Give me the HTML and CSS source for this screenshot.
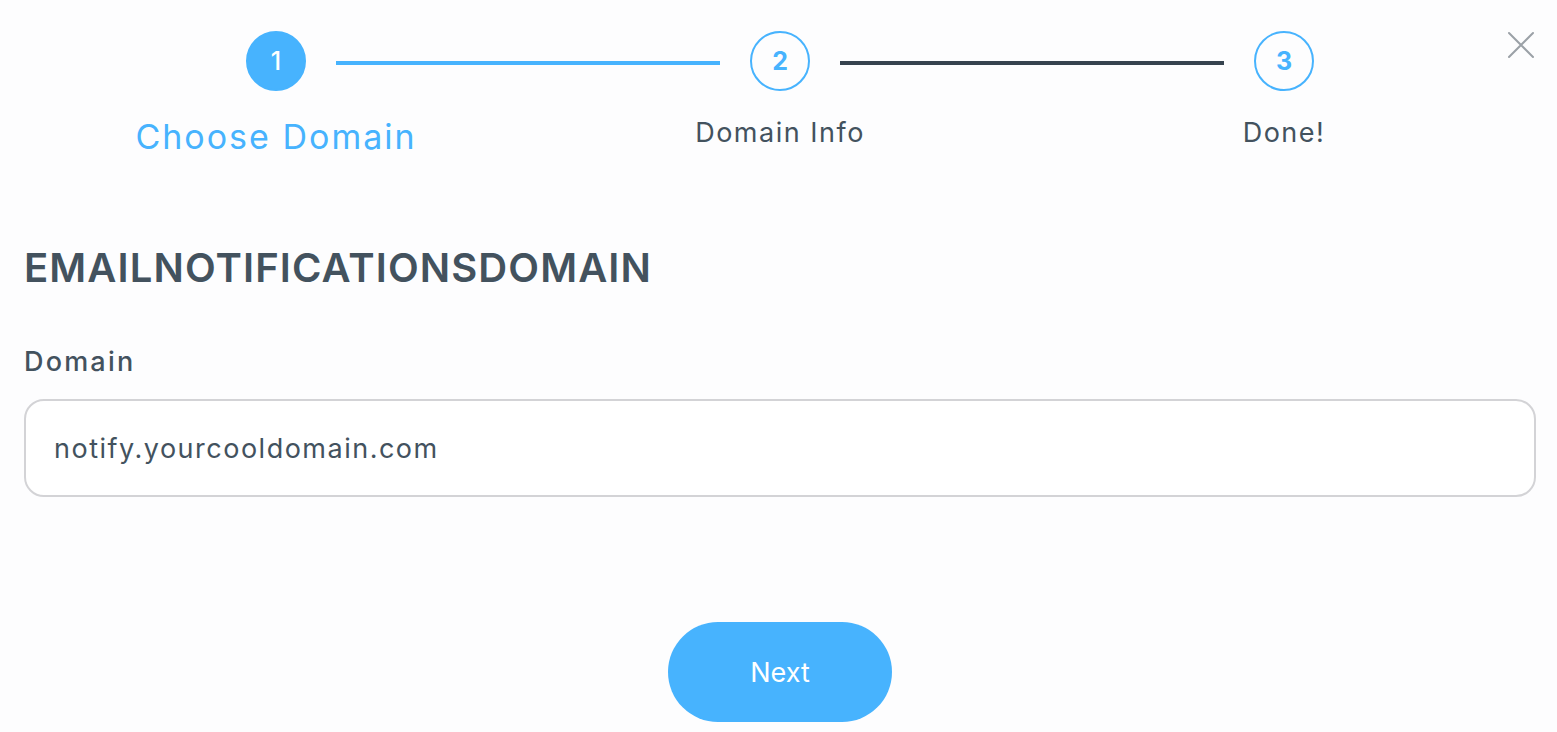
FILE: index.html
```html
<!DOCTYPE html>
<html lang="en">
<head>
    <meta charset="UTF-8">
    <meta name="viewport" content="width=device-width, initial-scale=1.0">
    <title>Email Notifications Domain</title>
    <link rel="stylesheet" href="styles.css">
</head>
<body>
    <div class="wizard">
        <button class="close-btn" type="button" aria-label="Close">
            <svg width="28" height="28" viewBox="0 0 28 28">
                <path d="M2 2 L26 26 M26 2 L2 26" stroke="#9ba1a7" stroke-width="2" stroke-linecap="round"/>
            </svg>
        </button>

        <div class="steps">
            <div class="step-track">
                <span class="step-dot active">1</span>
                <span class="step-line done"></span>
                <span class="step-dot">2</span>
                <span class="step-line"></span>
                <span class="step-dot">3</span>
            </div>
            <div class="step-labels">
                <div class="step-label active">Choose Domain</div>
                <div class="step-label">Domain Info</div>
                <div class="step-label">Done!</div>
            </div>
        </div>

        <h2 class="title">EMAILNOTIFICATIONSDOMAIN</h2>

        <form class="domain-form" onsubmit="return false">
            <label for="domain">Domain</label>
            <input type="text" id="domain" name="domain" value="notify.yourcooldomain.com">

            <div class="actions">
                <button type="submit" class="next-btn">Next</button>
            </div>
        </form>
    </div>
</body>
</html>
```

FILE: styles.css
```css
* {
    margin: 0;
    padding: 0;
    box-sizing: border-box;
}

body {
    font-family: Inter, 'Noto Sans', sans-serif;
    background: #fdfdfe;
    color: #43525e;
    overflow: hidden;
}

.wizard {
    position: relative;
    padding: 31px 21px 0 24px;
}

.close-btn {
    position: absolute;
    top: 31px;
    right: 22px;
    background: none;
    border: none;
    cursor: pointer;
    line-height: 0;
}

.step-track {
    display: grid;
    grid-template-columns: 60px 1fr 60px 1fr 60px;
    align-items: center;
    column-gap: 30px;
    padding: 0 222px;
}

.step-dot {
    width: 60px;
    height: 60px;
    border-radius: 50%;
    border: 2px solid #47b3fe;
    color: #47b3fe;
    display: flex;
    align-items: center;
    justify-content: center;
    font-size: 25px;
    font-weight: 700;
}

.step-dot.active {
    background: #47b3fe;
    color: #fff;
    font-weight: 500;
}

.step-line {
    height: 4px;
    margin-top: 4px;
    background: #36434f;
}

.step-line.done {
    background: #47b3fe;
}

.step-labels {
    display: grid;
    grid-template-columns: repeat(3, 1fr);
    text-align: center;
    margin-top: 24px;
}

.step-label {
    font-size: 27px;
    letter-spacing: 1.5px;
    line-height: 36px;
}

.step-label.active {
    color: #47b3fe;
    font-size: 34px;
    letter-spacing: 2px;
    line-height: 44px;
}

.title {
    margin-top: 84px;
    font-size: 40px;
    font-weight: 600;
    letter-spacing: 1.1px;
    line-height: 50px;
}

.domain-form label {
    display: block;
    margin-top: 52px;
    font-size: 27px;
    font-weight: 500;
    letter-spacing: 2.2px;
}

.domain-form input {
    display: block;
    width: 100%;
    height: 98px;
    margin-top: 21px;
    padding: 0 28px;
    border: 2px solid #d3d3d6;
    border-radius: 20px;
    background: #fff;
    font-family: inherit;
    font-size: 27px;
    letter-spacing: 1.5px;
    color: #43525e;
}

.domain-form input:focus {
    outline: none;
    border-color: #47b3fe;
}

.actions {
    display: flex;
    justify-content: center;
    margin-top: 125px;
}

.next-btn {
    width: 224px;
    height: 100px;
    border: none;
    border-radius: 50px;
    background: #47b3fe;
    color: #fff;
    font-family: inherit;
    font-size: 27px;
    cursor: pointer;
}
```
